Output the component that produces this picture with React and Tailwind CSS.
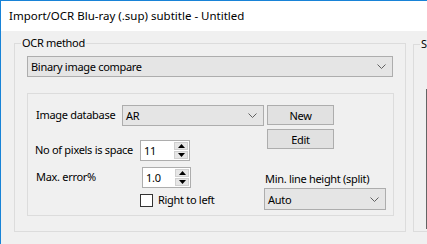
import React from "react";

const font = { fontFamily: '"Noto Sans", "Segoe UI", sans-serif' };

function Chevron() {
  return (
    <svg width="9" height="5" viewBox="0 0 9 5" className="shrink-0">
      <path d="M0.5 0.5 L4.5 4.5 L8.5 0.5" fill="none" stroke="#606060" strokeWidth="1" />
    </svg>
  );
}

function Combo({ value, className }) {
  return (
    <div
      className={`flex items-center justify-between pl-[3px] pr-[6px] bg-[#e5e5e5] border border-[#adadad] ${className}`}
    >
      <span className="leading-none">{value}</span>
      <Chevron />
    </div>
  );
}

function Spinner({ value, className }) {
  return (
    <div className={`flex items-stretch bg-white border border-[#adadad] shrink-0 ${className}`}>
      <span className="flex-1 pl-[3px] flex items-center leading-none">{value}</span>
      <div className="w-[16px] flex flex-col gap-[1px] p-[1px]">
        <div className="flex-1 bg-[#e6e6e6] border border-[#d0d0d0] flex items-center justify-center">
          <svg width="7" height="4" viewBox="0 0 7 4">
            <path d="M0 4 L3.5 0 L7 4 Z" fill="#000" />
          </svg>
        </div>
        <div className="flex-1 bg-[#e6e6e6] border border-[#d0d0d0] flex items-center justify-center">
          <svg width="7" height="4" viewBox="0 0 7 4">
            <path d="M0 0 L3.5 4 L7 0 Z" fill="#000" />
          </svg>
        </div>
      </div>
    </div>
  );
}

function Button({ children, className }) {
  return (
    <div
      className={`w-[67px] h-[20px] flex items-center justify-center bg-[#e1e1e1] border border-[#adadad] leading-none ${className}`}
    >
      {children}
    </div>
  );
}

export default function App() {
  return (
    <div
      style={font}
      className="w-[427px] h-[244px] overflow-hidden border-l border-t border-[#1883d7] bg-[#f0f0f0] text-[11px] tracking-[-0.3px] text-black"
    >
      <div className="h-[30px] bg-white pl-[8px] flex items-center text-[11.5px] tracking-normal">
        Import/OCR Blu-ray (.sup) subtitle - Untitled
      </div>

      <div className="flex items-start">
        {/* OCR method group */}
        <fieldset className="ml-[13px] mt-[4px] w-[392px] h-[197px] border border-[#dcdcdc] shrink-0">
          <legend className="ml-[6px] px-[1px] leading-[16px]">OCR method</legend>

          <Combo value="Binary image compare" className="ml-[12px] mt-[5px] w-[366px] h-[21px]" />

          <div className="ml-[12px] mt-[16px] w-[367px] h-[123px] border border-[#dcdcdc] flex">
            {/* left column */}
            <div className="w-[236px] pl-[8px]">
              <div className="mt-[11px] flex items-center h-[21px]">
                <span className="w-[86px] shrink-0 whitespace-nowrap">Image database</span>
                <Combo value="AR" className="w-[142px] h-[21px]" />
              </div>
              <div className="mt-[14px] flex items-center h-[21px]">
                <span className="w-[104px] shrink-0 whitespace-nowrap -ml-[1px]">No of pixels is space</span>
                <Spinner value="11" className="w-[50px] h-[21px] ml-[1px]" />
              </div>
              <div className="mt-[6px] flex items-center h-[21px]">
                <span className="w-[106px] shrink-0 whitespace-nowrap">Max. error%</span>
                <Spinner value="1.0" className="w-[49px] h-[21px]" />
              </div>
              <div className="mt-[6px] flex items-center h-[13px] ml-[104px]">
                <div className="w-[13px] h-[13px] bg-white border border-[#333333] shrink-0" />
                <span className="ml-[5px] whitespace-nowrap">Right to left</span>
              </div>
            </div>

            {/* right column */}
            <div className="flex flex-col">
              <Button className="mt-[11px] ml-[3px]">New</Button>
              <Button className="mt-[4px] ml-[3px]">Edit</Button>
              <span className="mt-[22px] ml-[1px] leading-[16px] whitespace-nowrap">
                Min. line height (split)
              </span>
              <Combo value="Auto" className="mt-[1px] w-[122px] h-[22px]" />
            </div>
          </div>
        </fieldset>

        {/* second group, clipped by the window edge */}
        <fieldset className="ml-[7px] mt-[5px] w-[200px] h-[196px] border border-[#dcdcdc] shrink-0">
          <legend className="ml-[6px] px-[1px] leading-[16px] whitespace-nowrap">S</legend>
          <div className="ml-[12px] mt-[37px] w-[100px] h-[140px] border-l border-[#646464]" />
        </fieldset>
      </div>
    </div>
  );
}
